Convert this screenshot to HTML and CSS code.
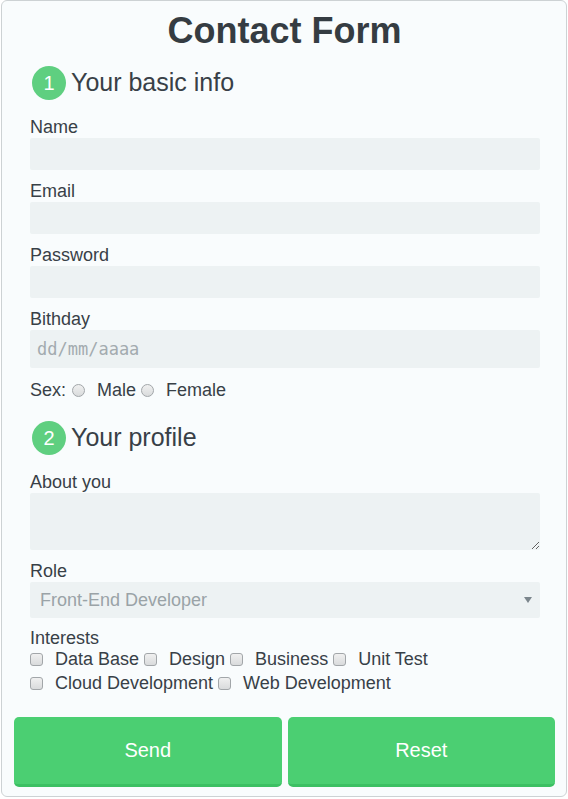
FILE: index.html
```html
<!DOCTYPE html>
<html lang="en">
<head>
<meta charset="utf-8">
<title>Contact Form</title>
<link rel="stylesheet" href="styles.css">
</head>
<body>
<form class="card">
  <h1 class="title">Contact Form</h1>

  <div class="section">
    <div class="heading"><span class="num">1</span><span class="heading-text">Your basic info</span></div>

    <div class="field">
      <label class="label">Name</label>
      <input class="input" type="text">
    </div>
    <div class="field">
      <label class="label">Email</label>
      <input class="input" type="text">
    </div>
    <div class="field">
      <label class="label">Password</label>
      <input class="input" type="password">
    </div>
    <div class="field">
      <label class="label">Bithday</label>
      <input class="input input-date" type="text" placeholder="dd/mm/aaaa">
    </div>
    <div class="sex-row">
      <span class="sex-label">Sex:</span><label class="opt"><input class="radio" type="radio" name="sex">Male</label><label class="opt"><input class="radio" type="radio" name="sex">Female</label>
    </div>

    <div class="heading heading-2"><span class="num">2</span><span class="heading-text">Your profile</span></div>

    <div class="field">
      <label class="label">About you</label>
      <textarea class="input textarea"></textarea>
    </div>
    <div class="field">
      <label class="label">Role</label>
      <div class="select-wrap">
        <select class="input select">
          <option>Front-End Developer</option>
        </select>
      </div>
    </div>
    <div class="field field-interests">
      <label class="label label-interests">Interests</label>
      <div class="checks">
        <label class="opt"><input class="check" type="checkbox">Data Base</label><label class="opt"><input class="check" type="checkbox">Design</label><label class="opt"><input class="check" type="checkbox">Business</label><label class="opt"><input class="check" type="checkbox">Unit Test</label>
      </div>
      <div class="checks">
        <label class="opt"><input class="check" type="checkbox">Cloud Development</label><label class="opt"><input class="check" type="checkbox">Web Development</label>
      </div>
    </div>
  </div>

  <div class="buttons">
    <button class="btn" type="button">Send</button>
    <button class="btn" type="button">Reset</button>
  </div>
</form>
</body>
</html>
```

FILE: styles.css
```css
html, body {
  margin: 0;
  padding: 0;
  background: #ffffff;
}

body {
  font-family: "Liberation Sans", Arial, sans-serif;
  color: #384047;
}

.card {
  margin: 0 1px;
  border: 1px solid #cdd2d4;
  border-radius: 6px;
  background: #f9fcfd;
  padding: 10px 11px 9px 12px;
}

.title {
  margin: 0;
  font-size: 36px;
  line-height: 40px;
  font-weight: bold;
  text-align: center;
  color: #353c42;
}

.section {
  padding: 0 15px 0 16px;
}

.heading {
  display: flex;
  align-items: center;
  height: 34px;
  margin: 15px 0 17px 2px;
}

.heading-2 {
  margin-top: 21px;
}

.num {
  width: 34px;
  height: 34px;
  border-radius: 50%;
  background: #5fcf80;
  color: #ffffff;
  font-size: 20px;
  line-height: 34px;
  text-align: center;
  flex: none;
}

.heading-text {
  font-size: 25px;
  line-height: 34px;
  margin-left: 5px;
  margin-top: -2px;
}

.field {
  margin-top: 11px;
}

.label {
  display: block;
  font-size: 18px;
  line-height: 20px;
  margin-bottom: 1px;
}

.input {
  display: block;
  box-sizing: border-box;
  width: 100%;
  height: 32px;
  border: none;
  border-radius: 2px;
  background: #edf2f3;
  margin: 0;
  padding: 0 10px;
  font-family: "Liberation Sans", Arial, sans-serif;
  font-size: 18px;
  color: #8a97a0;
  outline: none;
}

.input-date {
  height: 38px;
  padding-left: 7px;
  font-family: "DejaVu Sans Mono", "Liberation Mono", monospace;
  font-size: 17px;
}

.input-date::placeholder {
  color: #a3abaf;
}

.sex-row {
  margin-top: 12px;
  font-size: 18px;
  line-height: 20px;
}

.sex-label {
  margin-right: 6px;
}

.opt {
  font-size: 18px;
  margin-right: 5px;
}

.radio,
.check {
  -webkit-appearance: none;
  appearance: none;
  box-sizing: border-box;
  display: inline-block;
  width: 13px;
  height: 13px;
  margin: 0 12px 0 0;
  vertical-align: -1px;
  border: 1px solid #a2a6a9;
  background: linear-gradient(#f0f0f0, #d9dbdc);
}

.radio {
  border-radius: 50%;
}

.check {
  border-radius: 3px;
}

.textarea {
  height: 57px;
  resize: vertical;
  padding: 6px 10px;
}

.select-wrap {
  position: relative;
}

.select {
  height: 36px;
  appearance: none;
  -webkit-appearance: none;
  color: #9aa3a7;
  padding-left: 10px;
}

.select-wrap::after {
  content: "";
  position: absolute;
  right: 8px;
  top: 15px;
  border-left: 4px solid transparent;
  border-right: 4px solid transparent;
  border-top: 6px solid #7b868c;
}

.field-interests {
  margin-top: 12px;
}

.label-interests {
  line-height: 17px;
  margin-bottom: 0;
}

.checks {
  font-size: 18px;
  line-height: 24px;
  height: 24px;
}

.buttons {
  display: flex;
  gap: 6px;
  margin-top: 22px;
}

.btn {
  flex: 1;
  height: 70px;
  box-sizing: border-box;
  border: none;
  border-bottom: 3px solid #3cc063;
  border-radius: 5px;
  background: #4bcf72;
  color: #ffffff;
  font-family: "Liberation Sans", Arial, sans-serif;
  font-size: 20px;
  padding: 0;
}
```
